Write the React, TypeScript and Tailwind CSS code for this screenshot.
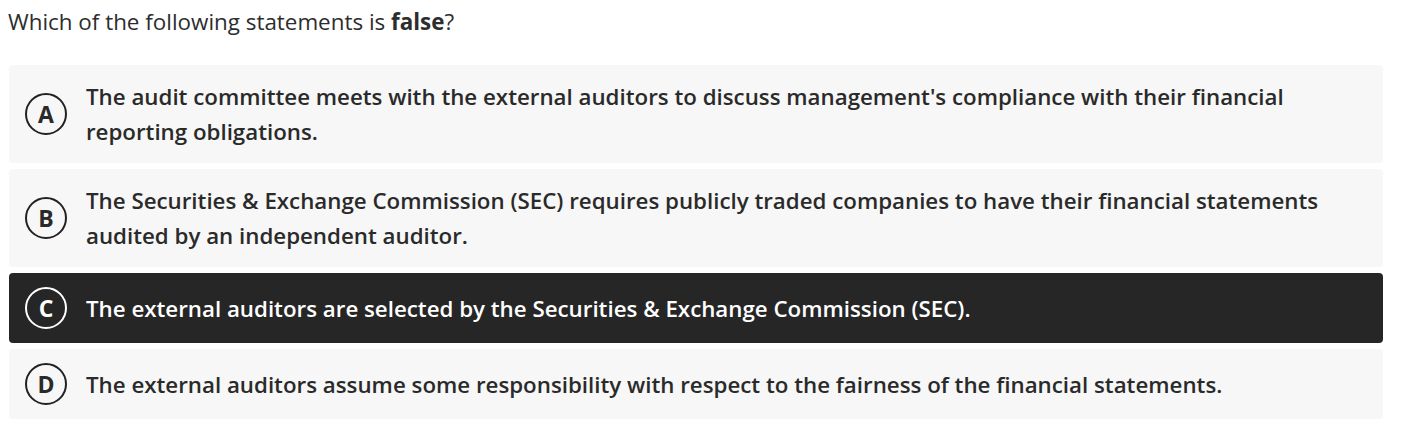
import React from "react";

const options = [
  {
    letter: "A",
    text: "The audit committee meets with the external auditors to discuss management's compliance with their financial reporting obligations.",
  },
  {
    letter: "B",
    text: "The Securities & Exchange Commission (SEC) requires publicly traded companies to have their financial statements audited by an independent auditor.",
  },
  {
    letter: "C",
    text: "The external auditors are selected by the Securities & Exchange Commission (SEC).",
    selected: true,
  },
  {
    letter: "D",
    text: "The external auditors assume some responsibility with respect to the fairness of the financial statements.",
  },
];

export default function App() {
  return (
    <div
      className="bg-white w-[1414px] h-[428px] pl-[8px] pt-[8px]"
      style={{ fontFamily: '"Open Sans", sans-serif' }}
    >
      <p className="text-[22.4px] leading-[28px] text-[#2d2d2d]">
        Which of the following statements is <b className="font-bold">false</b>?
      </p>
      <div className="mt-[29px] ml-px w-[1374px] flex flex-col gap-[6px]">
        {options.map((o) => (
          <div
            key={o.letter}
            className={
              o.selected
                ? "flex items-center rounded-[4px] bg-[#262626] py-[14px] pl-[16px] pr-[24px] text-white"
                : "flex items-center rounded-[4px] bg-[#f7f7f7] py-[14px] pl-[16px] pr-[24px] text-[#2a2a2a]"
            }
          >
            <div
              className={
                o.selected
                  ? "shrink-0 w-[42px] h-[42px] rounded-full border-2 border-white flex items-center justify-center text-[23px] leading-none font-bold"
                  : "shrink-0 w-[42px] h-[42px] rounded-full border-2 border-[#222222] flex items-center justify-center text-[23px] leading-none font-bold"
              }
            >
              {o.letter}
            </div>
            <div className="ml-[19px] text-[22.3px] leading-[35px] font-semibold">
              {o.text}
            </div>
          </div>
        ))}
      </div>
    </div>
  );
}
